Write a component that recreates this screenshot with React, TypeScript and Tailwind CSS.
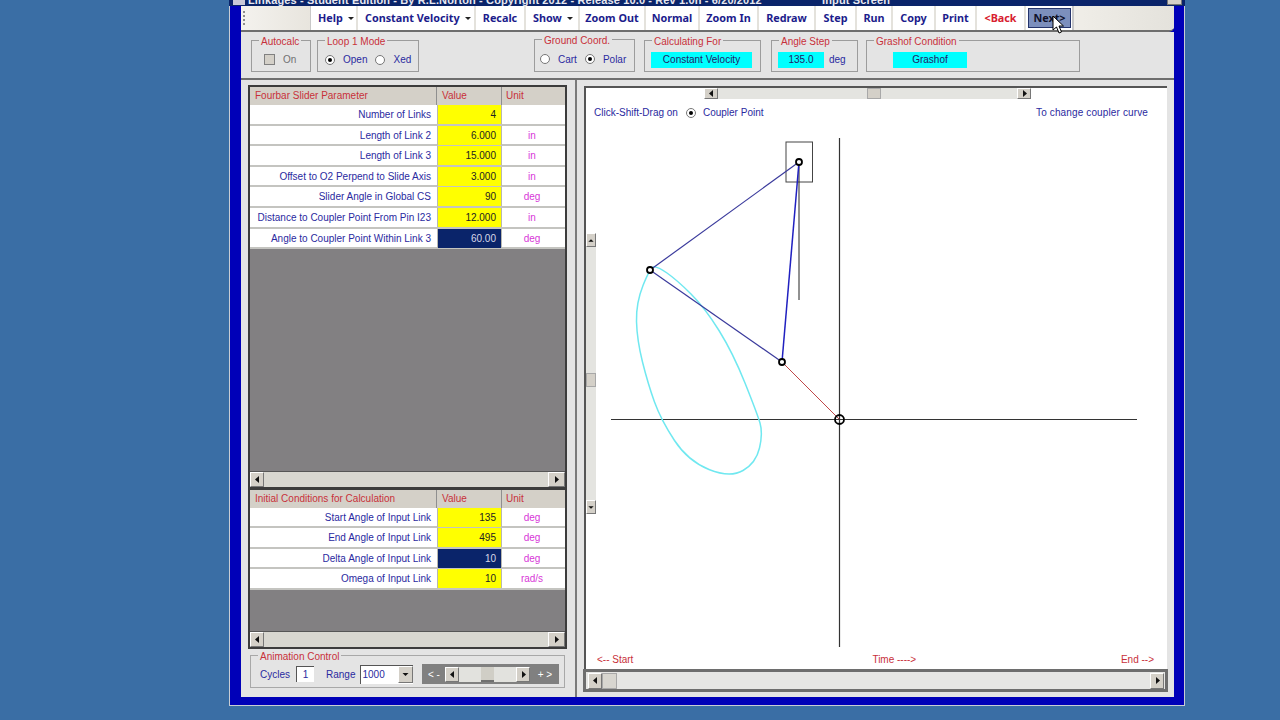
import type { ReactNode } from "react";

const toolbarItems = [
  { label: "Help", width: "w-[47px]", menu: true },
  { label: "Constant Velocity", width: "w-[118px]", menu: true },
  { label: "Recalc", width: "w-[50px]" },
  { label: "Show", width: "w-[54px]", menu: true },
  { label: "Zoom Out", width: "w-[66px]" },
  { label: "Normal", width: "w-[54px]" },
  { label: "Zoom In", width: "w-[59px]" },
  { label: "Redraw", width: "w-[57px]" },
  { label: "Step", width: "w-[41px]" },
  { label: "Run", width: "w-[36px]" },
  { label: "Copy", width: "w-[43px]" },
  { label: "Print", width: "w-[41px]" },
];

const linkRows = [
  { name: "Number of Links", value: "4", unit: "" },
  { name: "Length of Link 2", value: "6.000", unit: "in" },
  { name: "Length of Link 3", value: "15.000", unit: "in" },
  { name: "Offset to O2 Perpend to Slide Axis", value: "3.000", unit: "in" },
  { name: "Slider Angle in Global CS", value: "90", unit: "deg" },
  { name: "Distance to Coupler Point From Pin I23", value: "12.000", unit: "in" },
  { name: "Angle to Coupler Point Within Link 3", value: "60.00", unit: "deg", selected: true },
];

const conditionRows = [
  { name: "Start Angle of Input Link", value: "135", unit: "deg" },
  { name: "End Angle of Input Link", value: "495", unit: "deg" },
  { name: "Delta Angle of Input Link", value: "10", unit: "deg", selected: true },
  { name: "Omega of Input Link", value: "10", unit: "rad/s" },
];

// traced from the picture, smoothed in curvePath
const couplerCurve = [
  [650, 268], [636, 303], [637, 340], [648, 384], [661, 420], [688, 461], [730, 478],
  [756, 463], [763, 433], [757, 413], [733, 353], [705, 308], [677, 280], [657, 266],
];

function curvePath(points: number[][]) {
  const mid = (a: number[], b: number[]) => `${(a[0] + b[0]) / 2} ${(a[1] + b[1]) / 2}`;
  let d = `M ${mid(points[points.length - 1], points[0])}`;
  points.forEach((p, i) => {
    d += ` Q ${p[0]} ${p[1]} ${mid(p, points[(i + 1) % points.length])}`;
  });
  return d + " Z";
}

function GroupBox({ title, className, children }: { title: string; className: string; children: ReactNode }) {
  return (
    <div className={`relative shrink-0 border border-[#9c9c9c] flex items-center pt-[7px] ${className}`}>
      <span className="absolute left-[7px] -top-[5px] bg-[#e4e4e4] px-[2px] text-[10px] leading-[12px] text-[#c8303a]">
        {title}
      </span>
      {children}
    </div>
  );
}

function Radio({ on }: { on?: boolean }) {
  return (
    <span className="flex items-center justify-center w-[10px] h-[10px] rounded-full bg-white border border-[#777777] shrink-0">
      {on && <span className="w-[4px] h-[4px] rounded-full bg-black" />}
    </span>
  );
}

function Arrow({ dir }: { dir: "left" | "right" | "up" | "down" }) {
  const points = {
    left: "6,1 2,4.5 6,8",
    right: "3,1 7,4.5 3,8",
    up: "1.5,6 4.5,3 7.5,6",
    down: "1.5,3 4.5,6 7.5,3",
  }[dir];
  return (
    <svg width="9" height="9" viewBox="0 0 9 9">
      <polygon points={points} fill="#111111" />
    </svg>
  );
}

function ScrollButton({ dir, className = "" }: { dir: "left" | "right" | "up" | "down"; className?: string }) {
  return (
    <span
      className={`flex items-center justify-center shrink-0 bg-[#d4d0c8] border-r border-b border-[#777777] border-t-white border-l-white border-t border-l ${className}`}
    >
      <Arrow dir={dir} />
    </span>
  );
}

function TableHeader({ title }: { title: string }) {
  return (
    <div className="grid grid-cols-[187px_65px_63px] h-[18px] shrink-0 bg-[#d4d0c8] text-[10px] leading-[17px] text-[#c8303a]">
      <span className="pl-[5px] border-r border-[#8f8f8f]">{title}</span>
      <span className="pl-[5px] border-r border-[#8f8f8f]">Value</span>
      <span className="pl-[4px]">Unit</span>
    </div>
  );
}

function ParamRow({ name, value, unit, selected }: { name: string; value: string; unit: string; selected?: boolean }) {
  return (
    <div className="grid grid-cols-[187px_65px_63px] h-[20.6px] shrink-0 bg-white border-b-2 border-[#c4c4c0] text-[10px] leading-[19px]">
      <span className="pr-[6px] text-right text-[#2a2aa0] whitespace-nowrap">{name}</span>
      <span
        className={`pr-[5px] text-right border-x border-[#b8b8b0] ${selected ? "bg-[#0a246a] text-[#d8d8e8]" : "bg-[#ffff00] text-[#222222]"}`}
      >
        {value}
      </span>
      <span className="pr-[3px] text-center text-[#d838d8]">{unit}</span>
    </div>
  );
}

function TableScrollBar() {
  return (
    <div className="flex items-center h-[16px] shrink-0 bg-[#d4d0c8] border-t border-[#555555]">
      <ScrollButton dir="left" className="w-[14px] h-[15px]" />
      <span className="flex-1 h-[15px] bg-[#d8d7d0]" />
      <ScrollButton dir="right" className="w-[17px] h-[15px]" />
    </div>
  );
}

export default function App() {
  return (
    <div className="w-[1280px] h-[720px] overflow-hidden bg-[#3a6ea5] pl-[229px] font-['Liberation_Sans',Arial,sans-serif]">
      <div className="w-[956px] h-[706px] border-l border-r border-b border-[#c8ccd4] bg-[#0000b8] flex flex-col">
        {/* title bar, cut off by the top of the capture */}
        <div className="h-[6px] shrink-0 bg-[#0a246a] overflow-hidden flex items-end pl-[19px] text-[11px] font-bold leading-[12px] tracking-[0.13px] text-[#e8e8f0] whitespace-nowrap -mx-px relative">
          <span className="w-[574px] shrink-0">Linkages - Student Edition - By R.L.Norton - Copyright 2012 - Release 10.0 - Rev 1.0h - 6/20/2012</span>
          <span>Input Screen</span>
          <span className="absolute left-[938px] -top-[8px] w-[15px] h-[13px] bg-[#d4d0c8] border border-[#777777]" />
          <span className="absolute left-[4px] -top-[6px] w-[12px] h-[11px] bg-[#c8c8d8]" />
        </div>

        <div className="flex-1 min-h-0 mr-[10px] mb-[8px] ml-[11px] flex flex-col bg-[#e4e4e4]">
          {/* toolbar */}
          <div className="h-[26px] shrink-0 flex items-stretch bg-[#0000b8]">
            <div className="flex flex-1 items-stretch bg-white rounded-br-[5px] border-b-2 border-[#6e6e6e] overflow-hidden">
              <div className="w-[70px] shrink-0 bg-gradient-to-r from-[#f4f2ee] to-[#e8e5de] border-r border-[#c8c8c8] flex flex-col gap-[2px] pt-[5px] pl-[2px]">
                <span className="w-[2px] h-[2px] bg-[#8c8c8c]" />
                <span className="w-[2px] h-[2px] bg-[#8c8c8c]" />
                <span className="w-[2px] h-[2px] bg-[#8c8c8c]" />
                <span className="w-[2px] h-[2px] bg-[#8c8c8c]" />
              </div>
              {toolbarItems.map((item) => (
                <div
                  key={item.label}
                  className={`${item.width} shrink-0 flex items-center ${item.menu ? "justify-start pl-[7px] gap-[5px]" : "justify-center"} border-r-2 border-[#e4e2dc] text-[10.8px] font-bold text-[#1c1c8c] font-['Noto_Sans',sans-serif] whitespace-nowrap`}
                >
                  <span>{item.label}</span>
                  {item.menu && <span className="border-x-[3px] border-t-[3px] border-x-transparent border-t-[#222222] mt-[1px]" />}
                </div>
              ))}
              <div className="w-[49px] shrink-0 flex items-center justify-center border-r-2 border-[#e4e2dc] text-[10.8px] font-bold text-[#d82030] font-['Noto_Sans',sans-serif]">
                &lt;Back
              </div>
              <div className="w-[48px] shrink-0 flex items-center pl-[2px] border-r-2 border-[#c8c8c8]">
                <span className="w-[43px] h-[20px] flex items-center justify-center bg-[#7c8fbd] border border-[#24346c] text-[10.8px] font-bold text-[#10122c] font-['Noto_Sans',sans-serif]">
                  Next&gt;
                </span>
              </div>
              <div className="flex-1 bg-gradient-to-r from-[#f0eee8] to-[#e4e2dc]" />
            </div>
          </div>

          {/* option groups */}
          <div className="h-[48px] shrink-0 flex items-start pt-[8px] pl-[10px] border-b-2 border-[#6e6e6e] text-[10px] text-[#2a2aa0]">
            <GroupBox title="Autocalc" className="w-[60px] h-[32px] pl-[12px] gap-[8px]">
              <span className="w-[11px] h-[11px] bg-[#d4d0c8] border border-[#808080]" />
              <span className="text-[#707070]">On</span>
            </GroupBox>
            <GroupBox title="Loop 1 Mode" className="w-[102px] h-[32px] ml-[6px] pl-[7px]">
              <Radio on />
              <span className="ml-[8px]">Open</span>
              <span className="ml-[8px]"><Radio /></span>
              <span className="ml-[8px]">Xed</span>
            </GroupBox>
            <GroupBox title="Ground Coord." className="w-[101px] h-[33px] ml-[115px] -mt-px pl-[5px]">
              <Radio />
              <span className="ml-[8px]">Cart</span>
              <span className="ml-[8px]"><Radio on /></span>
              <span className="ml-[8px]">Polar</span>
            </GroupBox>
            <GroupBox title="Calculating For" className="w-[117px] h-[32px] ml-[9px] pl-[6px]">
              <span className="w-[101px] h-[16px] bg-[#00ffff] text-center leading-[16px] text-[#222266]">Constant Velocity</span>
            </GroupBox>
            <GroupBox title="Angle Step" className="w-[87px] h-[32px] ml-[10px] pl-[6px]">
              <span className="w-[46px] h-[16px] bg-[#00ffff] text-center leading-[16px] text-[#222266]">135.0</span>
              <span className="ml-[5px]">deg</span>
            </GroupBox>
            <GroupBox title="Grashof Condition" className="w-[214px] h-[32px] ml-[8px] pl-[26px]">
              <span className="w-[74px] h-[16px] bg-[#00ffff] text-center leading-[16px] text-[#222266]">Grashof</span>
            </GroupBox>
          </div>

          <div className="flex-1 min-h-0 flex">
            {/* left panel */}
            <div className="w-[334px] shrink-0 pt-[5px] pl-[7px] pr-[8px] flex flex-col">
              <div className="h-[564px] shrink-0 border-2 border-[#3c3c3c] bg-[#828082] flex flex-col">
                <TableHeader title="Fourbar Slider Parameter" />
                {linkRows.map((row) => (
                  <ParamRow key={row.name} {...row} />
                ))}
                <div className="flex-1" />
                <TableScrollBar />
                <div className="h-[3px] shrink-0 bg-[#3c3c3c]" />
                <TableHeader title="Initial Conditions for Calculation" />
                {conditionRows.map((row) => (
                  <ParamRow key={row.name} {...row} />
                ))}
                <div className="h-[41px] shrink-0" />
                <TableScrollBar />
              </div>
              <div className="relative mt-[6px] ml-[2px] w-[315px] h-[33px] border border-[#a8a8a8] flex items-center pl-[9px] pt-[5px] text-[10px] text-[#2a2aa0]">
                <span className="absolute left-[7px] -top-[5px] bg-[#e4e4e4] px-[2px] leading-[12px] text-[#c8303a]">Animation Control</span>
                <span>Cycles</span>
                <span className="ml-[6px] w-[18px] h-[16px] bg-white border-l border-t border-[#555555] text-center leading-[16px]">1</span>
                <span className="ml-[12px]">Range</span>
                <span className="ml-[5px] w-[53px] h-[19px] bg-white border-l border-t border-[#555555] flex items-center justify-between pl-[1px] text-[#2a2aa0]">
                  1000
                  <ScrollButton dir="down" className="w-[15px] h-[17px]" />
                </span>
                <span className="ml-[9px] w-[137px] h-[20px] bg-[#808080] flex items-center text-white">
                  <span className="w-[23px] text-center">&lt; -</span>
                  <ScrollButton dir="left" className="w-[14px] h-[15px]" />
                  <span className="relative flex-1 h-[15px] bg-[#e2e2de]">
                    <span className="absolute left-[22px] top-0 w-[13px] h-[15px] bg-[#d0cec6] border-b-2 border-[#707070]" />
                  </span>
                  <ScrollButton dir="right" className="w-[14px] h-[15px]" />
                  <span className="w-[29px] text-center">+ &gt;</span>
                </span>
              </div>
            </div>

            {/* right panel */}
            <div className="flex-1 border-l-2 border-[#7a7a7a] pt-[6px] pl-[7px] pr-[8px] flex flex-col">
              <div className="relative w-[583px] h-[583px] shrink-0 bg-white border-l-2 border-t-2 border-[#555555] flex flex-col justify-between text-[10px]">
                <svg className="absolute -left-[2px] -top-[1px]" width="583" height="582" viewBox="584 87 583 582">
                  <line x1="611" y1="419.5" x2="1137" y2="419.5" stroke="#333333" strokeWidth="1.2" />
                  <line x1="839.5" y1="138" x2="839.5" y2="647" stroke="#333333" strokeWidth="1.2" />
                  <rect x="786" y="142" width="26.5" height="40" fill="none" stroke="#444444" strokeWidth="1" />
                  <line x1="799" y1="162" x2="799" y2="300" stroke="#222222" strokeWidth="1" />
                  <path d={curvePath(couplerCurve)} fill="none" stroke="#70e8f0" strokeWidth="1.5" />
                  <line x1="650" y1="270" x2="799" y2="162" stroke="#3a3a9c" strokeWidth="1.2" />
                  <line x1="650" y1="270" x2="782" y2="362" stroke="#3a3a9c" strokeWidth="1.2" />
                  <line x1="782" y1="362" x2="799" y2="162" stroke="#2020c0" strokeWidth="1.5" />
                  <line x1="782" y1="362" x2="839" y2="419" stroke="#c04848" strokeWidth="1" />
                  <circle cx="650" cy="270" r="3" fill="white" stroke="black" strokeWidth="1.8" />
                  <circle cx="799" cy="162" r="3" fill="white" stroke="black" strokeWidth="1.8" />
                  <circle cx="782" cy="362" r="3" fill="white" stroke="black" strokeWidth="1.8" />
                  <circle cx="839.5" cy="419.5" r="4.5" fill="none" stroke="black" strokeWidth="1.8" />
                </svg>

                {/* horizontal and vertical scrollers sit on the canvas */}
                <div className="absolute left-[118px] top-0 w-[327px] h-[11px] flex bg-[#e4e4e0]">
                  <ScrollButton dir="left" className="w-[14px] h-[11px]" />
                  <span className="flex-1 relative">
                    <span className="absolute left-[149px] top-0 w-[14px] h-[11px] bg-[#d4d0c8] border border-[#a8a8a8]" />
                  </span>
                  <ScrollButton dir="right" className="w-[14px] h-[11px]" />
                </div>
                <div className="absolute left-0 top-[145px] w-[10px] h-[281px] flex flex-col bg-[#e4e4e0]">
                  <ScrollButton dir="up" className="w-[10px] h-[14px]" />
                  <span className="flex-1 relative">
                    <span className="absolute left-0 top-[126px] w-[10px] h-[14px] bg-[#d4d0c8] border border-[#a8a8a8]" />
                  </span>
                  <ScrollButton dir="down" className="w-[10px] h-[14px]" />
                </div>

                <div className="relative flex items-center justify-between pt-[17px] pl-[8px] pr-[19px] text-[#2a2aa0]">
                  <span className="flex items-center">
                    Click-Shift-Drag on
                    <span className="ml-[8px]"><Radio on /></span>
                    <span className="ml-[7px]">Coupler Point</span>
                  </span>
                  <span className="tracking-[0.13px]">To change coupler curve</span>
                </div>
                <div className="relative flex pb-[2px] pl-[11px] pr-[13px] text-[#c8303a]">
                  <span>&lt;-- Start</span>
                  <span className="ml-[239px]">Time ----&gt;</span>
                  <span className="ml-auto">End --&gt;</span>
                </div>
              </div>
              <div className="w-[585px] h-[23px] shrink-0 -ml-px flex items-center bg-[#e6e6e4] border-[3px] border-[#6e6e6e]">
                <ScrollButton dir="left" className="w-[14px] h-[16px] ml-[2px]" />
                <span className="w-[15px] h-[16px] bg-[#d8d6d0] border border-[#a8a8a8]" />
                <span className="flex-1" />
                <ScrollButton dir="right" className="w-[14px] h-[16px] mr-[1px]" />
              </div>
            </div>
          </div>
        </div>
      </div>

      {/* mouse pointer over Next */}
      <svg className="absolute left-[1052px] top-[15px]" width="13" height="20" viewBox="0 0 13 20">
        <path d="M1 1 L1 15 L4.5 12 L7 18 L9.5 17 L7 11 L11.5 11 Z" fill="white" stroke="black" strokeWidth="1" />
      </svg>
    </div>
  );
}
